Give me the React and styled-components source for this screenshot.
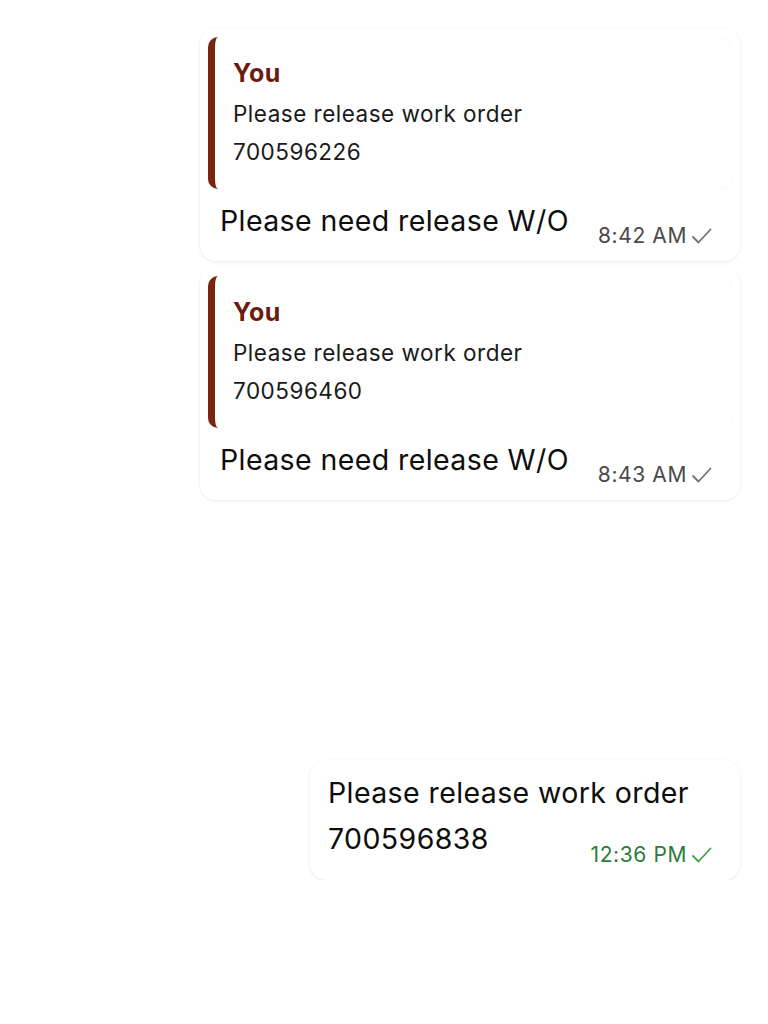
import { createGlobalStyle, styled } from "styled-components";

const GlobalStyle = createGlobalStyle`
    body {
        margin: 0;
        background: #ffffff;
        font-family: Inter, "Liberation Sans", Arial, sans-serif;
        color: #111111;
    }
`;

// column of chat bubbles, all sent by me so they sit on the right
const Thread = styled.div`
    display: flex;
    flex-direction: column;
    align-items: flex-end;
    padding: 28px 28px 0 0;
`;

const Bubble = styled.div`
    width: ${({ $width }) => $width}px;
    margin-top: ${({ $gap }) => $gap || 0}px;
    background: #ffffff;
    border-radius: 16px;
    box-shadow: 0 1px 3px rgba(215, 195, 215, 0.45);
    box-sizing: border-box;
    padding: ${({ $pad }) => $pad};
`;

const Quote = styled.div`
    background: #fefefe;
    border-left: 7px solid #7a2412;
    border-radius: 10px;
    padding: 14px 16px 18px 18px;
    box-shadow: 0 0 1px rgba(225, 220, 225, 0.6);
`;

const QuoteAuthor = styled.div`
    font-size: 25px;
    font-weight: 700;
    letter-spacing: 0.4px;
    line-height: 44px;
    color: #6a1c0c;
`;

const QuoteLine = styled.div`
    font-size: 22.5px;
    letter-spacing: 0.5px;
    line-height: 38px;
    color: #1a1a1a;
`;

const Row = styled.div`
    display: flex;
    align-items: flex-start;
    justify-content: space-between;
    padding: ${({ $pad }) => $pad};
`;

const MainText = styled.div`
    font-size: 28.5px;
    letter-spacing: 0.4px;
    line-height: ${({ $lh }) => $lh}px;
    color: #0d0d0d;
`;

const Meta = styled.div`
    display: flex;
    align-items: center;
    gap: 3px;
    margin-top: ${({ $top }) => $top}px;
    font-size: 21px;
    letter-spacing: 0.6px;
    line-height: 24px;
    color: ${({ $green }) => ($green ? "#2d7a3a" : "#4a4a4a")};
`;

function Check({ color }) {
    return (
        <svg width="23" height="20" viewBox="0 0 23 20" fill="none">
            <path d="M3 11 L8.5 16.5 L20.5 3.5" stroke={color} strokeWidth="1.8" strokeLinecap="round" strokeLinejoin="round" />
        </svg>
    );
}

function ReplyBubble({ number, time, gap }) {
    return (
        <Bubble $width={540} $gap={gap} $pad="9px 8px 0 8px">
            <Quote>
                <QuoteAuthor>You</QuoteAuthor>
                <QuoteLine>Please release work order</QuoteLine>
                <QuoteLine>{number}</QuoteLine>
            </Quote>
            <Row $pad="12px 19px 13px 12px">
                <MainText $lh={40}>Please need release W/O</MainText>
                <Meta $top={23}>
                    {time}
                    <Check color="#737373" />
                </Meta>
            </Row>
        </Bubble>
    );
}

export default function App() {
    return (
        <>
            <GlobalStyle />
            <Thread>
                <ReplyBubble number="700596226" time="8:42 AM" />
                <ReplyBubble number="700596460" time="8:43 AM" gap={6} />
                <Bubble $width={430} $gap={260} $pad="10px 27px 13px 18px">
                    <MainText $lh={46}>Please release work order</MainText>
                    <Row $pad="0">
                        <MainText $lh={46}>700596838</MainText>
                        <Meta $top={27} $green>
                            12:36 PM
                            <Check color="#43a047" />
                        </Meta>
                    </Row>
                </Bubble>
            </Thread>
        </>
    );
}
